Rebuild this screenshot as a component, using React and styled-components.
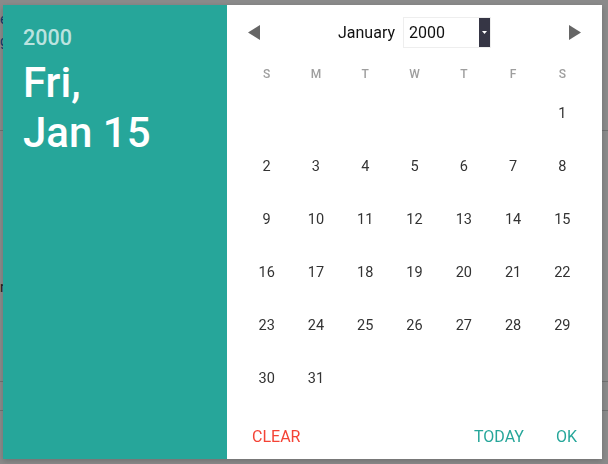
import styled, { createGlobalStyle } from 'styled-components';

const GlobalStyle = createGlobalStyle`
	html, body {
		margin: 0;
		padding: 0;
		background: #fff;
		font-family: Roboto, 'Noto Sans', Arial, sans-serif;
		overflow: hidden;
	}
`;

const Page = styled.div`
	width: 608px;
	height: 464px;
	display: flex;
	flex-direction: column;
`;

const PageSection = styled.div`
	height: ${(p) => p.$height}px;
	box-sizing: border-box;
	border-bottom: ${(p) => (p.$line ? '1px solid #d0d0d0' : 'none')};
	padding-top: ${(p) => p.$pad || 0}px;
	display: flex;
	flex-direction: column;
	gap: 8px;
	font-size: 14px;
	color: #333;
`;

const PageLink = styled.span`
	color: #1565c0;
	line-height: 14px;
`;

const Overlay = styled.div`
	position: fixed;
	inset: 0;
	background: rgba(0, 0, 0, 0.46);
	display: flex;
	align-items: flex-start;
	padding: 5px 0 0 3px;
`;

const Modal = styled.div`
	width: 599px;
	height: 454px;
	display: flex;
	background: #fff;
	box-shadow: 0 2px 6px rgba(0, 0, 0, 0.2);
`;

const DateDisplay = styled.div`
	width: 224px;
	flex-shrink: 0;
	background: #26a69a;
	color: #fff;
	padding: 20px 20px;
	box-sizing: border-box;
	font-weight: 500;
`;

const YearText = styled.div`
	font-size: 21.5px;
	line-height: 25px;
	color: rgba(255, 255, 255, 0.7);
	margin-bottom: 8px;
`;

const DateText = styled.div`
	font-size: 42px;
	line-height: 50px;
	font-weight: 500;
`;

const Calendar = styled.div`
	flex: 1;
	display: flex;
	flex-direction: column;
	padding: 12px 15px 0;
	box-sizing: border-box;
`;

const Controls = styled.div`
	height: 31px;
	display: flex;
	align-items: center;
	justify-content: space-between;
	padding: 0 6px;
`;

const NavButton = styled.button`
	border: none;
	background: none;
	padding: 0;
	width: 12px;
	height: 15px;
	display: flex;
	cursor: pointer;
`;

const MonthYear = styled.div`
	display: flex;
	align-items: center;
	gap: 8px;
	font-size: 16px;
	color: #111;
`;

const YearSelect = styled.div`
	width: 88px;
	height: 31px;
	box-sizing: border-box;
	border: 1px solid #eee;
	display: flex;
	align-items: stretch;
`;

const SelectValue = styled.span`
	flex: 1;
	display: flex;
	align-items: center;
	padding-left: 5px;
	font-size: 16px;
	color: #111;
`;

const SelectArrow = styled.span`
	width: 11px;
	background: #363645;
	display: flex;
	align-items: center;
	justify-content: center;
`;

const Table = styled.div`
	display: grid;
	grid-template-columns: repeat(7, 1fr);
	margin-top: 13px;
`;

const WeekDay = styled.div`
	height: 26px;
	display: flex;
	align-items: center;
	justify-content: center;
	font-size: 12px;
	font-weight: 500;
	color: #9e9e9e;
	box-sizing: border-box;
`;

const Day = styled.div`
	height: 53px;
	display: flex;
	align-items: center;
	justify-content: center;
	font-size: 14.5px;
	color: #333;
`;

const Footer = styled.div`
	flex: 1;
	display: flex;
	align-items: center;
	padding: 8px 0 0;
	margin: 0 -6px;
`;

const FlatButton = styled.button`
	border: none;
	background: none;
	padding: 0 16px;
	font-family: inherit;
	font-size: 16px;
	text-transform: uppercase;
	color: ${(p) => (p.$danger ? '#f44336' : '#26a69a')};
	margin-left: ${(p) => (p.$push ? 'auto' : '0')};
	cursor: pointer;
`;

const weekDays = ['S', 'M', 'T', 'W', 'T', 'F', 'S'];

// January 2000 starts on a Saturday
const days = [...Array(6).fill(null), ...Array.from({ length: 31 }, (_, i) => i + 1)];

function Triangle({ dir }) {
	const points = dir === 'left' ? '12,0 12,15 0,7.5' : '0,0 0,15 12,7.5';
	return (
		<svg width="12" height="15" viewBox="0 0 12 15">
			<polygon points={points} fill="#666" />
		</svg>
	);
}

export default function App() {
	return (
		<>
			<GlobalStyle />
			<Page>
				<PageSection $height={131} $line $pad={12}>
					<PageLink>elements</PageLink>
					<PageLink>groups</PageLink>
				</PageSection>
				<PageSection $height={251} $line $pad={148}>
					<span>number</span>
				</PageSection>
				<PageSection $height={29} $line />
			</Page>

			<Overlay>
				<Modal>
					<DateDisplay>
						<YearText>2000</YearText>
						<DateText>Fri,</DateText>
						<DateText>Jan 15</DateText>
					</DateDisplay>

					<Calendar>
						<Controls>
							<NavButton aria-label="Previous month">
								<Triangle dir="left" />
							</NavButton>
							<MonthYear>
								<span>January</span>
								<YearSelect>
									<SelectValue>2000</SelectValue>
									<SelectArrow>
										<svg width="5" height="3" viewBox="0 0 5 3">
											<polygon points="0,0 5,0 2.5,3" fill="#fff" />
										</svg>
									</SelectArrow>
								</YearSelect>
							</MonthYear>
							<NavButton aria-label="Next month">
								<Triangle dir="right" />
							</NavButton>
						</Controls>

						<Table>
							{weekDays.map((d, i) => (
								<WeekDay key={i}>{d}</WeekDay>
							))}
							{days.map((d, i) => (
								<Day key={i}>{d}</Day>
							))}
						</Table>

						<Footer>
							<FlatButton $danger>Clear</FlatButton>
							<FlatButton $push>Today</FlatButton>
							<FlatButton>Ok</FlatButton>
						</Footer>
					</Calendar>
				</Modal>
			</Overlay>
		</>
	);
}
